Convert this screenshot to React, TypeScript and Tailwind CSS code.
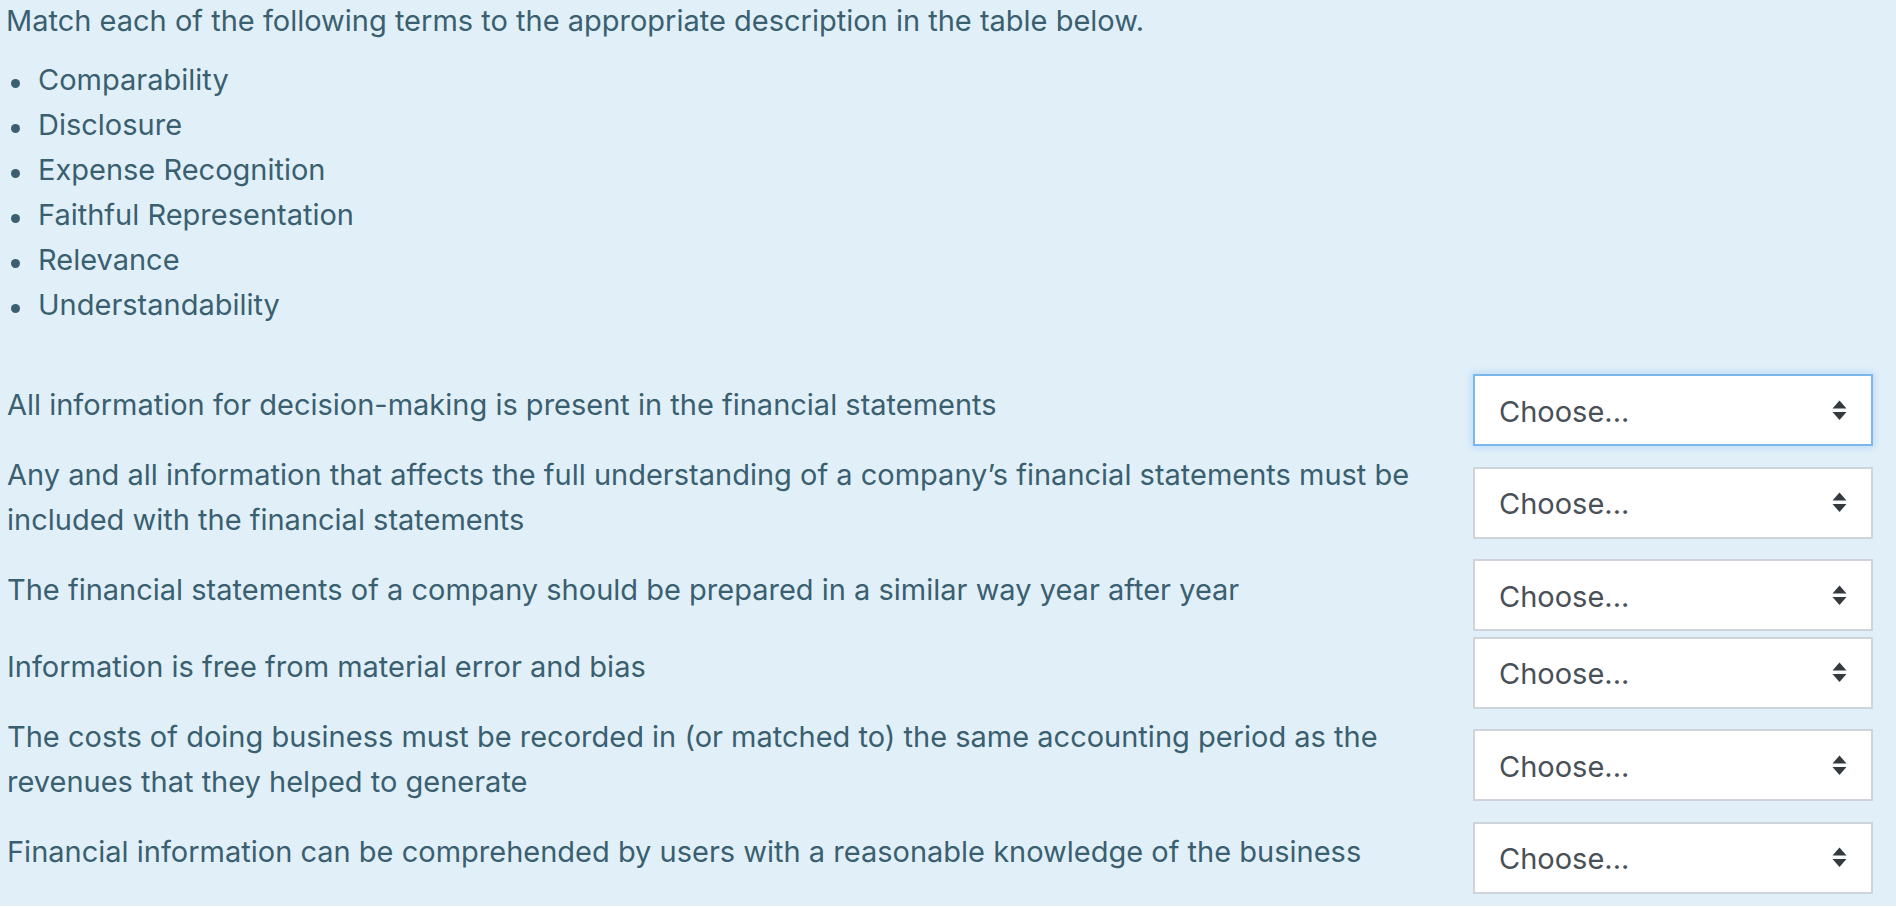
const TERMS = [
  "Comparability",
  "Disclosure",
  "Expense Recognition",
  "Faithful Representation",
  "Relevance",
  "Understandability",
];

const ROWS = [
  "All information for decision-making is present in the financial statements",
  "Any and all information that affects the full understanding of a company\u2019s financial statements must be included with the financial statements",
  "The financial statements of a company should be prepared in a similar way year after year",
  "Information is free from material error and bias",
  "The costs of doing business must be recorded in (or matched to) the same accounting period as the revenues that they helped to generate",
  "Financial information can be comprehended by users with a reasonable knowledge of the business",
];

function SortArrows() {
  return (
    <svg width="15" height="21" viewBox="0 0 15 21" className="shrink-0" aria-hidden>
      <path d="M7.5 0.5 L14.5 8.5 L0.5 8.5 Z" fill="#343a40" />
      <path d="M0.5 12 L14.5 12 L7.5 20 Z" fill="#343a40" />
    </svg>
  );
}

function ChooseSelect({ focused }: { focused?: boolean }) {
  return (
    <div
      role="combobox"
      aria-expanded="false"
      className={
        focused
          ? "flex h-[72px] w-[400px] shrink-0 items-center justify-between border-2 border-[#7db6ec] bg-white pl-[24px] pr-[24px] shadow-[0_0_7px_2px_rgba(0,123,255,0.16)]"
          : "flex h-[72px] w-[400px] shrink-0 items-center justify-between border-2 border-[#ced4da] bg-white pl-[24px] pr-[24px]"
      }
    >
      <span className="pt-[2px] text-[29px] leading-[45px] text-[#495057]">Choose...</span>
      <SortArrows />
    </div>
  );
}

export default function App() {
  return (
    <div className="min-h-screen bg-[#e1f0f8] pl-[6px] pr-[23px] font-['Inter','Liberation_Sans',sans-serif] text-[29px] leading-[45px] text-[#3a5f70]">
      <p className="-mt-[2px] mb-[14px]">
        Match each of the following terms to the appropriate description in the table below.
      </p>
      <ul className="mb-[47px]">
        {TERMS.map((t) => (
          <li key={t} className="flex items-start">
            <span className="ml-[5px] mr-[18px] mt-[22px] h-[9px] w-[9px] shrink-0 rounded-full bg-[#3a5f70]" />
            <span>{t}</span>
          </li>
        ))}
      </ul>
      <div className="flex flex-col gap-[5.5px]">
        {ROWS.map((r, i) => (
          <div key={i} className="flex items-center">
            <p className="flex-1 pb-[12px] pl-px pr-[30px]">{r}</p>
            <ChooseSelect focused={i === 0} />
          </div>
        ))}
      </div>
    </div>
  );
}
